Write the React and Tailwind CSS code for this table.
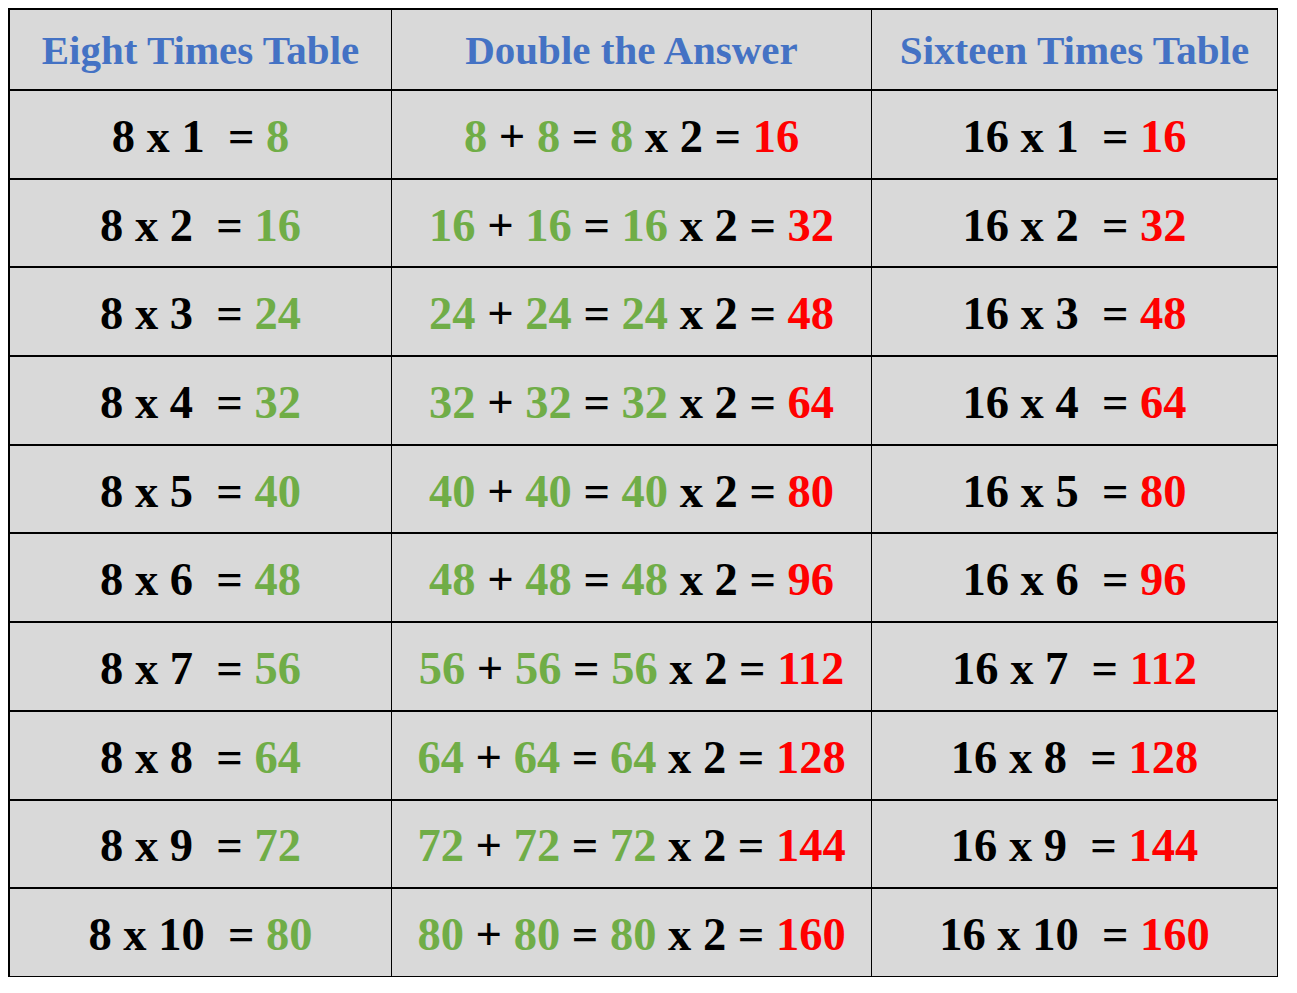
import React from "react";

const G = ({ children }) => <span className="text-[#70ad47]">{children}</span>;
const R = ({ children }) => <span className="text-[#ff0000]">{children}</span>;

export default function App() {
  const rows = Array.from({ length: 10 }, (_, i) => i + 1);
  return (
    <div className="w-[1297px] h-[993px] bg-white pt-[8px] pl-[8px]" style={{ fontFamily: '"Liberation Serif", "Times New Roman", serif' }}>
      <div className="w-[1270px] border-t-2 border-l-2 border-r border-b border-black bg-[#d9d9d9] font-bold">
        <div className="flex h-[81px] border-b-2 border-black text-[41px] text-[#4472c4] whitespace-pre">
          <div className="w-[382px] flex items-center justify-center border-r border-black pt-[2px]">Eight Times Table</div>
          <div className="w-[480px] flex items-center justify-center border-r border-black pt-[2px]">Double the Answer</div>
          <div className="flex-1 flex items-center justify-center pt-[2px]">Sixteen Times Table</div>
        </div>
        {rows.map((n, i) => (
          <div
            key={n}
            className={`flex text-[46.5px] text-black whitespace-pre ${i < 9 ? "h-[88.7px] border-b-2 border-black" : "h-[87px]"}`}
          >
            <div className="w-[382px] flex items-center justify-center border-r border-black pt-[5px]">
              <span>{`8 x ${n}  = `}</span>
              <G>{8 * n}</G>
            </div>
            <div className="w-[480px] flex items-center justify-center border-r border-black pt-[5px]">
              <G>{8 * n}</G>
              <span> + </span>
              <G>{8 * n}</G>
              <span> = </span>
              <G>{8 * n}</G>
              <span> x 2 = </span>
              <R>{16 * n}</R>
            </div>
            <div className="flex-1 flex items-center justify-center pt-[5px]">
              <span>{`16 x ${n}  = `}</span>
              <R>{16 * n}</R>
            </div>
          </div>
        ))}
      </div>
    </div>
  );
}
